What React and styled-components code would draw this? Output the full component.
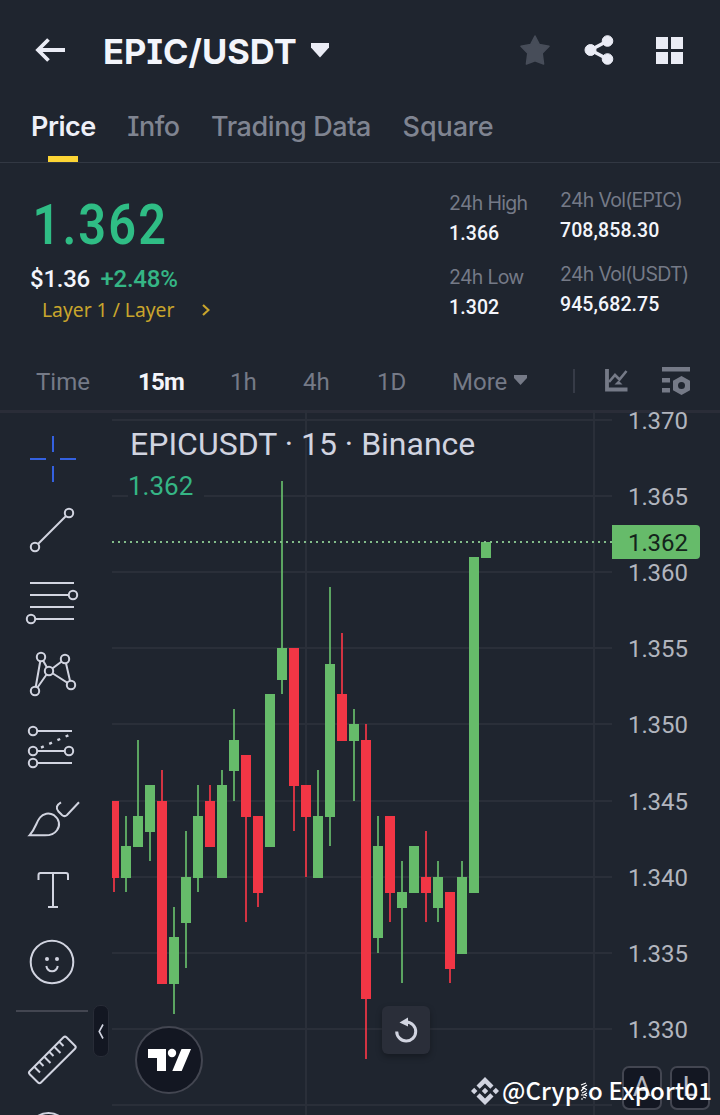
import React from "react";
import styled, { createGlobalStyle } from "styled-components";

const c = {
  bg: "#1f252f",
  white: "#f3f5fb",
  muted: "#7f8491",
  dim: "#757a87",
  line: "#323843",
  green: "#2fbd85",
  up: "#66bb6a",
  down: "#f23645",
  icon: "#d1d4e0",
  dark: "#131722",
  edge: "#434651",
};

const Global = createGlobalStyle`
  * { box-sizing: border-box; }
  body { margin: 0; background: ${c.bg}; }
`;

const Screen = styled.main`
  position: relative;
  display: flex;
  flex-direction: column;
  width: 720px;
  height: 1115px;
  overflow: hidden;
  background: ${c.bg};
  color: ${c.white};
  font-family: Inter, "Liberation Sans", sans-serif;
  font-feature-settings: "cv08" 1;
  white-space: nowrap;
`;

const Header = styled.header`
  display: flex;
  align-items: center;
  height: 100px;
  padding: 0 37px 0 35px;
`;

const Pair = styled.h1`
  display: flex;
  align-items: center;
  gap: 14px;
  margin: 4px auto 0 38px;
  font-size: 34.5px;
  line-height: 40px;
  font-weight: 650;
  letter-spacing: 0.05px;
  svg { margin-top: -3px; }
`;

const HeaderActions = styled.div`
  display: flex;
  align-items: center;
  gap: 34px;
`;

const Tabs = styled.nav`
  display: flex;
  gap: 31.5px;
  height: 63px;
  padding-left: 31px;
  border-bottom: 1px solid ${c.line};
`;

const Tab = styled.div`
  position: relative;
  padding-top: 10px;
  font-size: 27px;
  line-height: 34px;
  font-weight: ${(p) => (p.$active ? 600 : 500)};
  letter-spacing: ${(p) => p.$spacing || 0}px;
  color: ${(p) => (p.$active ? "#eef0f8" : c.muted)};
  &::after {
    content: "";
    display: ${(p) => (p.$active ? "block" : "none")};
    position: absolute;
    left: 17px;
    bottom: 0;
    width: 30px;
    height: 6px;
    background: #fcd535;
  }
`;

const Summary = styled.section`
  display: flex;
  height: 187px;
  padding: 0 0 0 30px;
`;

const PriceBlock = styled.div`
  width: 419px;
  padding-top: 30px;
  font-family: Roboto, sans-serif;
`;

const BigPrice = styled.div`
  padding-left: 2px;
  font-size: 55px;
  line-height: 64px;
  font-weight: 600;
  letter-spacing: 2.4px;
  transform: scaleX(0.885);
  transform-origin: 6px 0;
  color: ${c.green};
`;

const Change = styled.div`
  display: flex;
  gap: 10.5px;
  margin-top: 7px;
  font-size: 24px;
  line-height: 30px;
  font-weight: 500;
  letter-spacing: -0.25px;
  span + span { color: #35b585; }
`;

const Category = styled.div`
  display: flex;
  align-items: center;
  gap: 28px;
  padding-left: 12px;
  font-family: "Noto Sans", sans-serif;
  font-size: 19.3px;
  line-height: 32px;
  color: #c9a52c;
`;

const StatColumn = styled.div`
  width: ${(p) => p.$width}px;
  padding-top: ${(p) => p.$top}px;
`;

const Stat = styled.div`
  height: 74px;
`;

const StatLabel = styled.div`
  font-size: 19.5px;
  line-height: 29px;
  letter-spacing: -0.7px;
  color: ${c.dim};
`;

const StatValue = styled.div`
  font-family: Roboto, sans-serif;
  font-size: 19.5px;
  line-height: 31px;
  font-weight: 500;
  letter-spacing: 0.1px;
`;

const Intervals = styled.div`
  display: flex;
  align-items: center;
  height: 63px;
  padding: 1px 29px 0 36px;
  border-bottom: 3px solid #2a2d38;
  font-family: Roboto, sans-serif;
  font-size: 24px;
  color: ${c.dim};
`;

const Interval = styled.div`
  display: flex;
  align-items: center;
  gap: 7px;
  width: ${(p) => p.$width}px;
  padding-top: 2px;
  font-weight: ${(p) => (p.$active ? 700 : 400)};
  letter-spacing: ${(p) => (p.$active ? -0.8 : 0)}px;
  color: ${(p) => (p.$active ? c.white : c.dim)};
  svg { margin-top: -3px; }
`;

const Separator = styled.div`
  width: 2px;
  height: 24px;
  margin-right: 30px;
  background: #363b47;
`;

const IntervalIcons = styled.div`
  display: flex;
  align-items: center;
  gap: 34px;
`;

const Workspace = styled.section`
  position: relative;
  display: flex;
  height: 702px;
`;

const Tools = styled.aside`
  width: 112px;
  padding: 10px 0 0 16px;
  svg { display: block; }
`;

const ToolDivider = styled.div`
  width: 72px;
  height: 2px;
  margin: 11px 0 12px;
  background: ${c.edge};
`;

const Plot = styled.svg`
  display: block;
  margin-top: -3px;
  overflow: visible;
  font-family: Roboto, sans-serif;
`;

const Legend = styled.div`
  position: absolute;
  left: 124px;
  top: 10px;
  padding-left: 6px;
  font-family: Roboto, sans-serif;
  font-size: 32px;
  line-height: 42px;
  color: ${c.icon};
`;

const LegendPrice = styled.div`
  width: 76px;
  margin-left: -2px;
  background: ${c.bg};
  font-size: 26px;
  line-height: 42px;
  color: #35b585;
`;

const Collapse = styled.button`
  position: absolute;
  left: 93px;
  top: 592px;
  width: 16px;
  height: 52px;
  padding: 0;
  border: 1px solid #282c37;
  border-radius: 7px;
  background: ${c.dark};
  svg { display: block; margin: auto; }
`;

const Badge = styled.div`
  position: absolute;
  left: 135px;
  top: 613px;
  width: 68px;
  height: 68px;
  border: 2px solid ${c.edge};
  border-radius: 50%;
  background: ${c.dark};
`;

const Reset = styled.button`
  position: absolute;
  left: 382px;
  top: 593px;
  width: 48px;
  height: 48px;
  padding: 0;
  border: 0;
  border-radius: 6px;
  background: #2a2e39;
  box-shadow: 0 3px 6px rgba(0, 0, 0, 0.3);
`;

const ScaleButtons = styled.div`
  position: absolute;
  left: 622px;
  top: 653px;
  display: flex;
  gap: 8px;
`;

const ScaleButton = styled.button`
  width: 40px;
  height: 44px;
  padding: 0 0 3px;
  border: 2px solid ${c.edge};
  border-radius: 7px;
  background: ${c.dark};
  color: #b2b5be;
  font: 28px Roboto, sans-serif;
`;

const Watermark = styled.div`
  position: absolute;
  left: 471px;
  top: 1073px;
  display: flex;
  align-items: center;
  gap: 3px;
  height: 36px;
  font-family: "Noto Sans CJK SC", sans-serif;
  font-size: 24px;
  font-weight: 500;
  letter-spacing: 0.13px;
  color: #fff;
  > span { margin-top: -4px; }
`;

const Tool = ({ children, color = c.icon }) => (
  <svg width="72" height="72" viewBox="0 0 72 72" fill="none" stroke={color} strokeWidth="2">
    {children}
  </svg>
);

const Nodes = ({ at }) => at.map(([x, y]) => <circle key={`${x}-${y}`} cx={x} cy={y} r="4.2" fill={c.bg} />);

// high, body top, body bottom, low: thousandths above 1.300
const candles = [
  ["d", 45, 45, 40, 39], ["u", 44, 42, 40, 39], ["u", 49, 44, 42, 42], ["u", 46, 46, 43, 41],
  ["d", 47, 45, 33, 33], ["u", 38, 36, 33, 31], ["u", 43, 40, 37, 34], ["u", 46, 44, 40, 39],
  ["d", 46, 45, 42, 42], ["u", 47, 46, 40, 40], ["u", 51, 49, 47, 45], ["d", 48, 48, 44, 37],
  ["d", 44, 44, 39, 38], ["u", 52, 52, 42, 42], ["u", 66, 55, 53, 52], ["d", 55, 55, 46, 43],
  ["d", 46, 46, 44, 40], ["u", 47, 44, 40, 40], ["u", 59, 54, 44, 42], ["d", 56, 52, 49, 49],
  ["u", 51, 50, 49, 45], ["d", 50, 49, 32, 28], ["u", 44, 42, 36, 35], ["d", 44, 44, 39, 37],
  ["u", 41, 39, 38, 33], ["u", 42, 42, 39, 39], ["d", 43, 40, 39, 37], ["u", 41, 40, 38, 37],
  ["d", 39, 39, 34, 33], ["u", 41, 40, 35, 35], ["u", 61, 61, 39, 39], ["u", 62, 62, 61, 61],
];
const yOf = (v) => Math.round(10 + (70 - v) * 15.22);
const levels = [70, 65, 60, 55, 50, 45, 40, 35, 30, 25];

function Chart() {
  return (
    <Plot width="608" height="705" viewBox="0 0 608 705">
      <g fill="#2a2f39">
        {levels.map((v) => <rect key={v} x="0" y={yOf(v) - 1} width="500" height="2" />)}
        <rect x="193" y="0" width="2" height="705" />
        <rect x="481" y="0" width="2" height="705" />
      </g>
      {candles.map(([kind, hi, top, bottom, low], i) => {
        const x = 2 + i * 12;
        const left = Math.max(0, x - 5);
        return (
          <g key={i} fill={kind === "u" ? c.up : c.down}>
            <rect x={x - 1} y={yOf(hi)} width="2" height={yOf(low) - yOf(hi)} opacity="0.85" />
            <rect x={left} y={yOf(top)} width={x + 5 - left} height={yOf(bottom) - yOf(top) + 1} />
          </g>
        );
      })}
      <path d="M0 132H500" stroke="#83bd8a" strokeWidth="2" strokeDasharray="2 4" />
      <g fill="#b2b5be" fontSize="24">
        {levels.slice(0, 9).map((v) => (
          <text key={v} x="516" y={yOf(v) + 9} letterSpacing="-0.1">{`1.3${v}`}</text>
        ))}
      </g>
      <path d="M500 115h84a4 4 0 0 1 4 4v26a4 4 0 0 1-4 4h-84z" fill={c.up} />
      <text x="516" y="141" fontSize="24" letterSpacing="-0.1" fill="#14241b">1.362</text>
    </Plot>
  );
}

function ToolRail() {
  return (
    <Tools>
      <Tool color="#3461e0"><path d="M37 13v16M37 43v16M14 36h16M44 36h16" /></Tool>
      <Tool><path d="M19 52 53 18" /><Nodes at={[[53, 18], [19, 52]]} /></Tool>
      <Tool><path d="M14 16h44M14 28h44M14 40h44M14 52h44" /><Nodes at={[[57, 28], [15, 52]]} /></Tool>
      <Tool>
        <path d="M19 52 25 18 33 32 49 20 55 46 33 32Z" />
        <Nodes at={[[25, 18], [49, 20], [33, 32], [55, 46], [19, 52]]} />
      </Tool>
      <Tool>
        <path d="M17 20h39M17 40h36M17 52h39" />
        <path d="M25 36.6 53 24" strokeWidth="2.4" strokeDasharray="3 6" />
        <Nodes at={[[17, 20], [17, 40], [53, 40], [17, 52]]} />
      </Tool>
      <Tool>
        <path d="M13.5 52.3C20 45 20 39.5 24 34.5C27 30.5 33 29 38 32.2C43.5 36 44.5 42.5 41 47.2C38 51.5 34 52.3 29 52.3Z" />
        <path d="M45 19.3C40.5 22 39.5 25 42.5 28.5L46 32Q48.5 34.3 51 32L63 19.3" />
      </Tool>
      <Tool><path d="M22.5 25v-5q0-2 2-2h25.500q2 0 2 2v5M37 18v34M32 52h10" /></Tool>
      <Tool>
        <circle cx="36" cy="35" r="21.3" />
        <g fill={c.icon} stroke="none"><circle cx="31" cy="32" r="2" /><circle cx="41" cy="32" r="2" /></g>
        <path d="M30.300 39c1.500 7 10 7 11.500 0" />
      </Tool>
      <ToolDivider />
      <Tool>
        <path d="M47.500 13.300q1.500-1.300 3 0l8.500 8.500q1.500 1.500 0 3L25 58.500q-1.500 1.500-3 0l-8.300-8.300q-1.500-1.500 0-3Z" />
        <path d="m43.500 18 4 4M38.500 23l6 6M33.500 28l4 4M28.500 33l6 6M23.500 38l4 4M18.500 43l5.500 5.500" />
      </Tool>
      <Tool><circle cx="32.500" cy="37" r="20" /></Tool>
    </Tools>
  );
}

export default function App() {
  return (
    <>
      <Global />
      <Screen>
        <Header>
          <svg width="30" height="24" viewBox="0 0 30 24" fill="none" stroke="#eaecf5" strokeWidth="3.800">
            <path d="M30 12H3M13.500 1.500 3 12l10.500 10.500" />
          </svg>
          <Pair>
            EPIC/USDT
            <svg width="18" height="15" viewBox="0 0 18 15"><path d="M0 0h18v4.500L9 14.500 0 4.500z" fill="#eaecf5" /></svg>
          </Pair>
          <HeaderActions>
            <svg width="30" height="30" viewBox="0 0 30 30">
              <path d="m15 1 4.400 8.600 9.600 1.700-6.800 7 1.400 10.700L15 25.800 6.400 29l1.400-10.700-6.800-7 9.600-1.700Z" fill="#474d59" stroke="#474d59" strokeWidth="1.500" strokeLinejoin="round" />
            </svg>
            <svg width="30" height="30" viewBox="0 0 30 30" fill="#eaecf5" stroke="#eaecf5">
              <path d="M23.500 6 6.500 15l17 9" fill="none" strokeWidth="3.500" />
              <circle cx="6.500" cy="15" r="5.500" /><circle cx="23.500" cy="6" r="5.300" /><circle cx="23.500" cy="24" r="5.300" />
            </svg>
            <svg width="35" height="28" viewBox="-8 0 35 28" fill="#eaecf5">
              <path d="M0 1h12v12H0zM15 1h12v12H15zM0 16h12v12H0zM15 16h12v12H15z" />
            </svg>
          </HeaderActions>
        </Header>

        <Tabs>
          <Tab $active $spacing={-0.5}>Price</Tab>
          <Tab $spacing={-0.5}>Info</Tab>
          <Tab $spacing={-0.4}>Trading Data</Tab>
          <Tab $spacing={-0.1}>Square</Tab>
        </Tabs>

        <Summary>
          <PriceBlock>
            <BigPrice>1.362</BigPrice>
            <Change><span>$1.36</span><span>+2.48%</span></Change>
            <Category>
              Layer 1 / Layer
              <svg width="8" height="12" viewBox="0 0 8 12" fill="none" stroke="#c9a52c" strokeWidth="2.200"><path d="m1 1 5.500 5L1 11" /></svg>
            </Category>
          </PriceBlock>
          <StatColumn $width={111} $top={26}>
            <Stat><StatLabel>24h High</StatLabel><StatValue>1.366</StatValue></Stat>
            <Stat><StatLabel>24h Low</StatLabel><StatValue>1.302</StatValue></Stat>
          </StatColumn>
          <StatColumn $width={150} $top={23}>
            <Stat><StatLabel>24h Vol(EPIC)</StatLabel><StatValue>708,858.30</StatValue></Stat>
            <Stat><StatLabel>24h Vol(USDT)</StatLabel><StatValue>945,682.75</StatValue></Stat>
          </StatColumn>
        </Summary>

        <Intervals>
          <Interval $width={102}>Time</Interval>
          <Interval $width={92} $active>15m</Interval>
          <Interval $width={73}>1h</Interval>
          <Interval $width={74}>4h</Interval>
          <Interval $width={75}>1D</Interval>
          <Interval $width={121}>
            More
            <svg width="13" height="10" viewBox="0 0 13 10"><path d="M0 0h13v3L6.500 10 0 3z" fill={c.dim} /></svg>
          </Interval>
          <Separator />
          <IntervalIcons>
            <svg width="23" height="23" viewBox="0 0 23 23" fill="none" stroke={c.dim}>
              <path d="M2 0v20.500h20.500" strokeWidth="3.800" />
              <path d="m4 13 6-7 4.500 4.500L21.500 2" strokeWidth="2.600" />
              <path d="m9.500 15.500 4-4 4 4z" fill={c.dim} stroke="none" />
            </svg>
            <svg width="28" height="28" viewBox="0 0 28 28" fill={c.dim}>
              <path d="M0 0h28v4.500H0zM0 11h8v4.500H0zM0 21h8v4.500H0z" />
              <path fillRule="evenodd" d="m19.500 9 8.500 4.800v9.400L19.500 28 11 23.200v-9.400zM19.500 15a3.500 3.500 0 1 0 0 7 3.500 3.500 0 0 0 0-7z" />
            </svg>
          </IntervalIcons>
        </Intervals>

        <Workspace>
          <ToolRail />
          <Chart />
          <Legend>
            EPICUSDT · 15 · Binance
            <LegendPrice>1.362</LegendPrice>
          </Legend>
          <Collapse>
            <svg width="6" height="15" viewBox="0 0 6 15" fill="none" stroke={c.icon} strokeWidth="1.600"><path d="M5 .5 1.200 7.500 5 14.500" /></svg>
          </Collapse>
          <Badge>
            <svg width="64" height="64" viewBox="0 0 64 64" fill="#fff">
              <path d="M11 21h18v22h-9V30h-9zM44.500 21H54l-9.300 22h-9.400z" /><circle cx="35" cy="25" r="4.200" />
            </svg>
          </Badge>
          <Reset>
            <svg width="48" height="48" viewBox="0 0 48 48" fill="none" stroke={c.icon} strokeWidth="3">
              <path d="M14.700 25.500a9.500 9.500 0 1 0 9.800-9.500" /><path d="M17.500 16.500 26 11.500v9z" fill={c.icon} stroke="none" />
            </svg>
          </Reset>
          <ScaleButtons>
            <ScaleButton>A</ScaleButton>
            <ScaleButton>L</ScaleButton>
          </ScaleButtons>
        </Workspace>

        <Watermark>
          <svg width="28" height="28" viewBox="0 0 28 28" fill={c.icon}>
            <path d="m14 0 8.500 8.500-3.200 3.200L14 6.400l-5.300 5.300-3.200-3.200zM14 28l-8.500-8.500 3.200-3.200 5.300 5.300 5.300-5.300 3.200 3.200zM14 10.800l3.200 3.200-3.200 3.200-3.200-3.200zM3.200 10.800 6.400 14l-3.200 3.200L0 14zM24.800 10.800 28 14l-3.200 3.200-3.200-3.200z" />
          </svg>
          <span>
            @Cryp
            <svg width="8" height="18" viewBox="0 0 8 18" fill="none" stroke="#fff" strokeWidth="1.200">
              <path d="M1 3l5-2M2 6l5-3M1 9l3-3 3 2M2 11l4-2M1 13h3l3-2M3 15l3 1M1 17h2M5 13l2 1" />
            </svg>
            o Export01
          </span>
        </Watermark>
      </Screen>
    </>
  );
}
